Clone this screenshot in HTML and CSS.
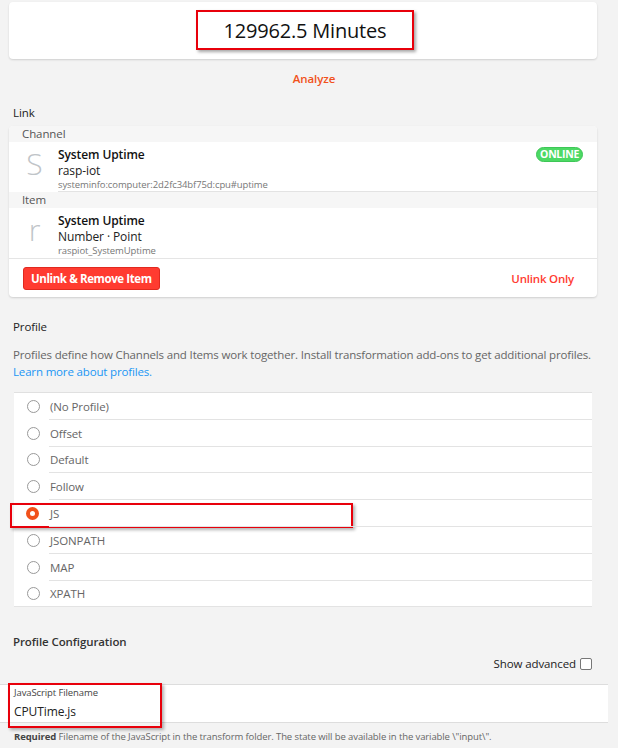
FILE: index.html
```html
<!DOCTYPE html>
<html>
<head>
<meta charset="utf-8">
<link rel="stylesheet" href="styles.css">
</head>
<body>
<div class="page">
  <div class="state-card">
    <div class="state-box">129962.5 Minutes</div>
  </div>
  <div class="analyze">Analyze</div>

  <div class="block-title link-title">Link</div>
  <div class="link-card">
    <div class="group-head">Channel</div>
    <div class="entry entry-channel">
      <div class="entry-icon">S</div>
      <div class="entry-body">
        <div class="entry-title">System Uptime</div>
        <div class="entry-sub">rasp-iot</div>
        <div class="entry-foot">systeminfo:computer:2d2fc34bf75d:cpu#uptime</div>
      </div>
      <span class="badge">ONLINE</span>
    </div>
    <div class="group-head">Item</div>
    <div class="entry">
      <div class="entry-icon">r</div>
      <div class="entry-body">
        <div class="entry-title">System Uptime</div>
        <div class="entry-sub">Number · Point</div>
        <div class="entry-foot">raspiot_SystemUptime</div>
      </div>
    </div>
    <div class="actions">
      <button class="btn-danger">Unlink &amp; Remove Item</button>
      <span class="btn-text">Unlink Only</span>
    </div>
  </div>

  <div class="block-title profile-title">Profile</div>
  <p class="desc">Profiles define how Channels and Items work together. Install transformation add-ons to get additional profiles.<br><a class="learn">Learn more about profiles.</a></p>

  <div class="profile-list">
    <div class="opt"><span class="radio"></span><span class="opt-label">(No Profile)</span></div>
    <div class="opt"><span class="radio"></span><span class="opt-label">Offset</span></div>
    <div class="opt"><span class="radio"></span><span class="opt-label">Default</span></div>
    <div class="opt"><span class="radio"></span><span class="opt-label">Follow</span></div>
    <div class="opt opt-selected"><span class="radio radio-on"></span><span class="opt-label">JS</span><span class="mark mark-js"></span></div>
    <div class="opt"><span class="radio"></span><span class="opt-label">JSONPATH</span></div>
    <div class="opt"><span class="radio"></span><span class="opt-label">MAP</span></div>
    <div class="opt"><span class="radio"></span><span class="opt-label">XPATH</span></div>
  </div>

  <div class="block-title config-title">Profile Configuration</div>
  <div class="advanced">Show advanced <span class="checkbox"></span></div>
  <div class="field">
    <div class="field-label">JavaScript Filename</div>
    <div class="field-value">CPUTime.js</div>
    <span class="mark mark-field"></span>
  </div>
  <div class="hint"><b>Required</b> Filename of the JavaScript in the transform folder. The state will be available in the variable \"input\".</div>
</div>
</body>
</html>
```

FILE: styles.css
```css
html, body {
  margin: 0;
  padding: 0;
  background: #f3f3f3;
}
body {
  font-family: "Open Sans", "Noto Sans", sans-serif;
  font-size: 11.5px;
  letter-spacing: -0.1px;
  color: #222;
  width: 618px;
  height: 748px;
  overflow: hidden;
}
.page {
  padding-top: 2px;
}
.state-card {
  margin: 0 21px 0 9px;
  height: 57px;
  background: #fff;
  border-radius: 4px;
  box-shadow: 0 1px 2px rgba(0,0,0,0.15);
  display: flex;
  justify-content: center;
  align-items: flex-start;
}
.state-box {
  margin-top: 8px;
  width: 214px;
  height: 36px;
  border: 2px solid #e8000b;
  box-shadow: 2px 2px 3px rgba(0,0,0,0.35);
  display: flex;
  align-items: center;
  justify-content: center;
  font-size: 20px;
  letter-spacing: -0.2px;
  color: #111;
  margin-left: 4px;
}
.analyze {
  text-align: center;
  color: #f1511b;
  font-weight: 600;
  margin-top: 12px;
  line-height: 16px;
  padding-left: 10px;
}
.block-title {
  padding-left: 13px;
  line-height: 16px;
  color: #222;
}
.link-title { margin-top: 18px; }
.link-card {
  margin: 5px 21px 0 9px;
  background: #fff;
  border-radius: 4px;
  box-shadow: 0 1px 2px rgba(0,0,0,0.15);
  overflow: hidden;
}
.group-head {
  height: 16px;
  line-height: 16px;
  background: #f6f6f6;
  color: #555;
  padding-left: 13px;
}
.entry {
  position: relative;
  display: flex;
  height: 50px;
  background: #fff;
}
.entry-channel::after {
  content: "";
  position: absolute;
  left: 49px;
  right: 0;
  bottom: 0;
  border-bottom: 1px solid #e3e3e3;
}
.entry-icon {
  width: 49px;
  text-align: center;
  font-size: 30px;
  font-weight: 300;
  color: #c0c4c8;
  line-height: 40px;
  padding-top: 2px;
  padding-left: 2px;
  box-sizing: border-box;
}
.entry-body {
  padding-top: 5px;
}
.entry-title {
  font-weight: 600;
  font-size: 12px;
  line-height: 16px;
  color: #111;
}
.entry-sub {
  font-size: 12px;
  line-height: 16px;
  color: #222;
}
.entry-foot {
  font-size: 9.5px;
  line-height: 11px;
  color: #777;
}
.badge {
  position: absolute;
  right: 14px;
  top: 5px;
  background: #4cd964;
  color: #fff;
  font-weight: 700;
  font-size: 10.5px;
  letter-spacing: -0.3px;
  line-height: 13px;
  padding: 0 3px;
  border-radius: 8px;
  border: 1px solid #3ec656;
}
.actions {
  height: 38px;
  border-top: 1px solid #e5e5e5;
  display: flex;
  align-items: center;
  justify-content: space-between;
  padding: 0 23px 0 14px;
}
.btn-danger {
  font-family: inherit;
  background: #ff3b30;
  color: #fff;
  font-weight: 700;
  font-size: 11.5px;
  letter-spacing: -0.4px;
  border: 1px solid #e0291f;
  border-radius: 3px;
  height: 23px;
  padding: 0 7px;
}
.btn-text {
  color: #ff3b30;
  font-weight: 600;
  letter-spacing: -0.2px;
}
.profile-title { margin-top: 22px; }
.desc {
  margin: 11px 0 0 0;
  padding-left: 13px;
  line-height: 17px;
  color: #666;
  letter-spacing: -0.16px;
}
.learn { color: #2196f3; }
.profile-list {
  margin: 12px 26px 0 14px;
  background: #fff;
  border-top: 1px solid #e0e0e0;
}
.opt {
  position: relative;
  display: flex;
  align-items: center;
  height: 26.8px;
}
.opt::after {
  content: "";
  position: absolute;
  left: 35px;
  right: 0;
  bottom: 0;
  border-bottom: 1px solid #e3e3e3;
}
.opt:last-child::after { left: 0; }
.radio {
  width: 11px;
  height: 11px;
  border: 1px solid #999;
  border-radius: 50%;
  margin-left: 13px;
  box-sizing: content-box;
}
.radio-on {
  border: 4px solid #f1511b;
  width: 5px;
  height: 5px;
  background: #fff;
  margin-left: 12px;
}
.opt-label {
  margin-left: 10px;
  color: #666;
}
.radio-on + .opt-label { margin-left: 11px; }
.mark {
  position: absolute;
  border: 2px solid #e8000b;
  box-shadow: 2px 2px 3px rgba(0,0,0,0.3);
  pointer-events: none;
}
.mark-js {
  left: -4px;
  top: 3px;
  width: 339px;
  height: 21px;
}
.config-title {
  margin-top: 27px;
  font-weight: 600;
  color: #333;
}
.advanced {
  display: flex;
  justify-content: flex-end;
  align-items: center;
  margin-top: 6px;
  padding-right: 26px;
  color: #222;
  line-height: 16px;
}
.checkbox {
  width: 10px;
  height: 10px;
  border: 1px solid #777;
  border-radius: 2px;
  margin-left: 4px;
  background: #fff;
}
.field {
  position: relative;
  margin: 12px 10px 0 0;
  height: 37px;
  background: #fff;
  border-top: 1px solid #ddd;
  border-bottom: 1px solid #ddd;
  padding-left: 14px;
}
.field-label {
  font-size: 9.5px;
  line-height: 12px;
  color: #444;
  padding-top: 2px;
}
.field-value {
  font-size: 12px;
  line-height: 16px;
  color: #222;
  margin-top: 5px;
}
.mark-field {
  left: 8px;
  top: -2px;
  width: 150px;
  height: 41px;
}
.hint {
  padding-left: 14px;
  margin-top: 8px;
  font-size: 9.5px;
  color: #666;
  line-height: 12px;
}
.hint b { color: #444; font-weight: 700; }
```
